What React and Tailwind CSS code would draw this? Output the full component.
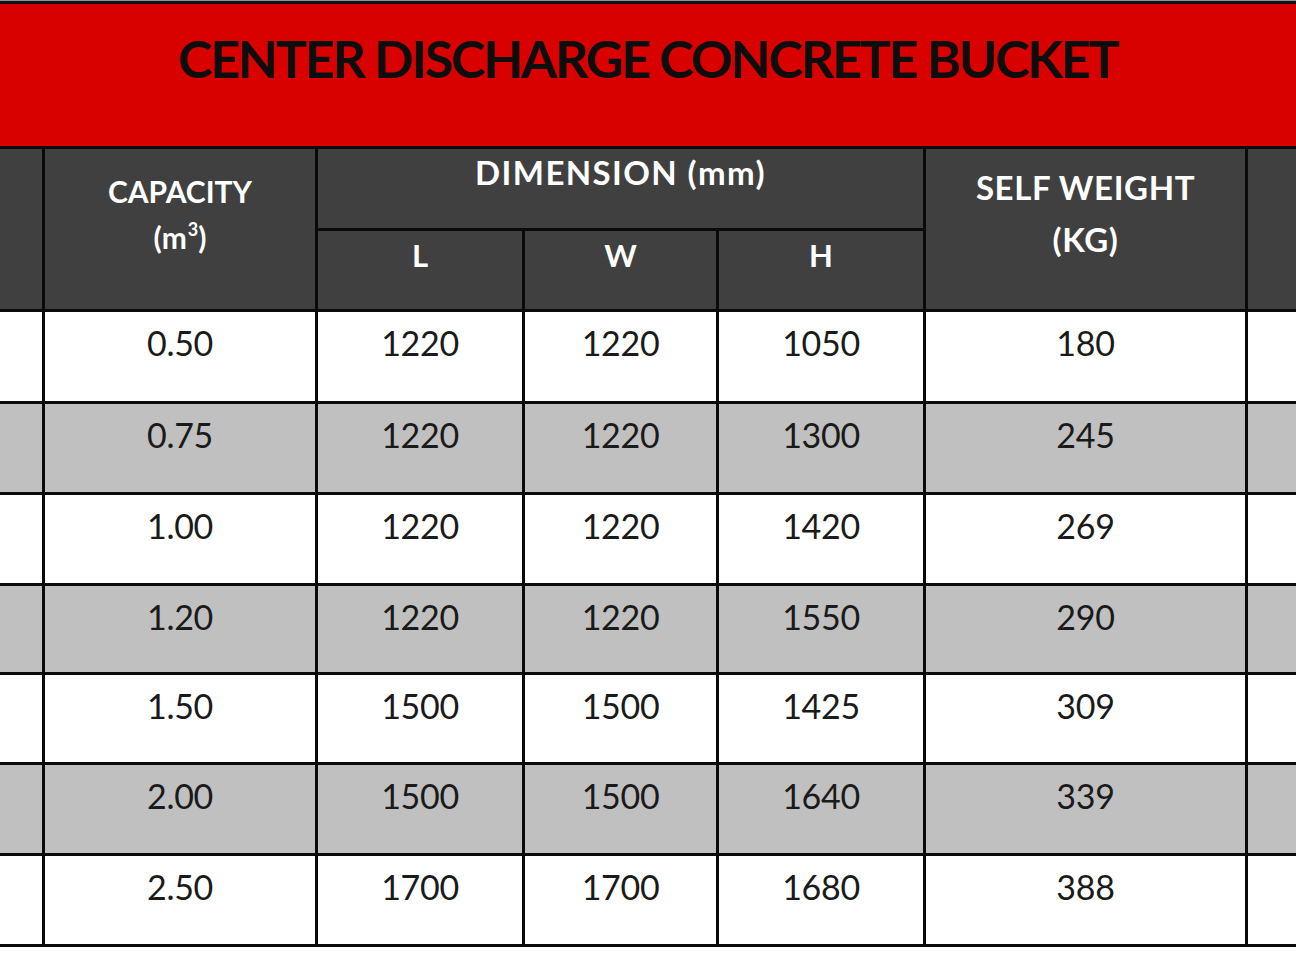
import React from "react";

const rows = [
  ["0.50", "1220", "1220", "1050", "180"],
  ["0.75", "1220", "1220", "1300", "245"],
  ["1.00", "1220", "1220", "1420", "269"],
  ["1.20", "1220", "1220", "1550", "290"],
  ["1.50", "1500", "1500", "1425", "309"],
  ["2.00", "1500", "1500", "1640", "339"],
  ["2.50", "1700", "1700", "1680", "388"],
];

export default function App() {
  return (
    <div
      className="w-[1296px] h-[954px] bg-white overflow-hidden"
      style={{ fontFamily: "Lato, 'Open Sans', sans-serif" }}
    >
      <div className="h-[1px] bg-[#8a9898]" />
      <div className="h-[3px] bg-[#1a1010]" />
      <div className="h-[142px] bg-[#d90000] flex justify-center pt-[28px]">
        <h1 className="text-[52px] font-bold leading-[52px] text-[#0d0d0d] tracking-[-2.2px]">
          CENTER DISCHARGE CONCRETE BUCKET
        </h1>
      </div>
      <div className="grid grid-cols-[42px_270px_204px_191px_204px_319px_1fr] grid-rows-[79px_78px_89px_88px_88px_86px_87px_88px_88px] gap-[3px] bg-[#0a0a0a] border-y-[3px] border-[#0a0a0a]">
        <div className="row-span-2 bg-[#404040]" />
        <div className="row-span-2 bg-[#404040] flex flex-col items-center pt-[19px] text-white font-bold text-[30px] leading-[46px]">
          <span>CAPACITY</span>
          <span>
            (m<sup className="text-[18px] relative -top-[13px] ml-[1px]">3</sup>)
          </span>
        </div>
        <div className="col-span-3 bg-[#404040] flex justify-center pt-0 text-white font-bold text-[33px] leading-[46px] tracking-[1.4px]">
          DIMENSION (mm)
        </div>
        <div className="row-span-2 bg-[#404040] flex flex-col items-center pt-[12px] text-white font-bold text-[33px] leading-[52px] tracking-[0.6px]">
          <span>SELF WEIGHT</span>
          <span>(KG)</span>
        </div>
        <div className="row-span-2 bg-[#404040]" />
        {["L", "W", "H"].map((h) => (
          <div
            key={h}
            className="bg-[#404040] flex justify-center pt-[1px] text-white font-bold text-[31px] leading-[46px]"
          >
            {h}
          </div>
        ))}
        {rows.map((r, i) => {
          const bg = i % 2 === 0 ? "bg-white" : "bg-[#c0c0c0]";
          return (
            <React.Fragment key={i}>
              <div className={bg} />
              {r.map((v, j) => (
                <div
                  key={j}
                  className={`${bg} flex justify-center pt-[10px] text-[34px] leading-[42px] text-[#1a1a1a] tracking-[-0.3px]`}
                >
                  {v}
                </div>
              ))}
              <div className={bg} />
            </React.Fragment>
          );
        })}
      </div>
    </div>
  );
}
